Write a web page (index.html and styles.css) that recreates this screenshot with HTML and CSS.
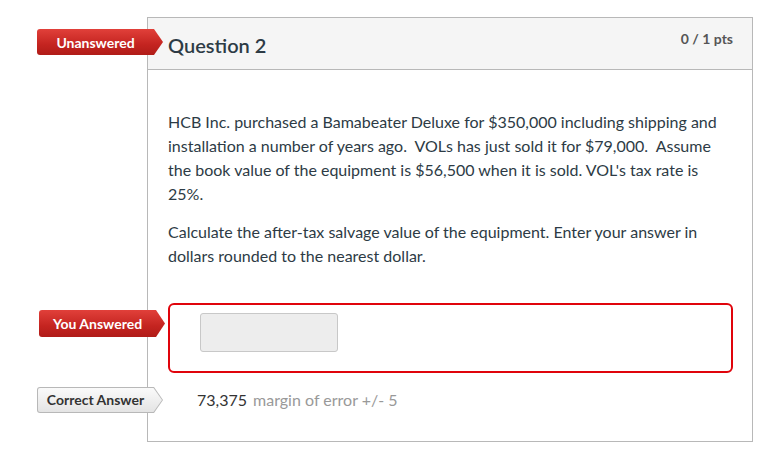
FILE: index.html
```html
<!DOCTYPE html>
<html>
<head>
<meta charset="utf-8">
<link rel="stylesheet" href="styles.css">
</head>
<body>
<div class="card">
  <div class="header">
    <span class="badge badge-red badge-unanswered">Unanswered</span>
    <h2 class="qname">Question 2</h2>
    <div class="pts">0 / 1 pts</div>
  </div>
  <div class="body">
    <p class="para">HCB Inc. purchased a Bamabeater Deluxe for $350,000 including shipping and installation a number of years ago.&nbsp; VOLs has just sold it for $79,000.&nbsp; Assume the book value of the equipment is $56,500 when it is sold. VOL's tax rate is 25%.</p>
    <p class="para">Calculate the after-tax salvage value of the equipment. Enter your answer in dollars rounded to the nearest dollar.</p>
    <div class="answer-box">
      <span class="badge badge-red badge-you">You Answered</span>
      <div class="input"></div>
    </div>
    <div class="correct-row">
      <span class="badge badge-gray badge-correct"><span class="badge-label">Correct Answer</span></span>
      <span class="value">73,375</span>
      <span class="margin">margin of error +/- 5</span>
    </div>
  </div>
</div>
</body>
</html>
```

FILE: styles.css
```css
html, body {
  margin: 0;
  padding: 0;
  background: #ffffff;
}
body {
  font-family: Lato, "Open Sans", "Liberation Sans", sans-serif;
  color: #2d3b45;
}
.card {
  margin: 17px 0 0 147px;
  width: 606px;
  box-sizing: border-box;
  border: 1px solid #b8b8b8;
  padding-bottom: 28px;
}
.header {
  position: relative;
  height: 51px;
  background: #f5f5f5;
  border-bottom: 1px solid #b8b8b8;
  display: flex;
  justify-content: space-between;
  align-items: flex-start;
  padding: 0 19px 0 20px;
}
.qname {
  margin: 15px 0 0;
  font-size: 20px;
  line-height: 24px;
  font-weight: 600;
  color: #2d3b45;
}
.pts {
  margin-top: 11px;
  font-size: 14px;
  line-height: 20px;
  font-weight: 700;
  color: #555;
}
.body {
  padding: 40px 19px 0 20px;
}
.para {
  margin: 0 0 14px;
  font-size: 16px;
  line-height: 24px;
}
.answer-box {
  position: relative;
  margin-top: 35px;
  height: 70px;
  box-sizing: border-box;
  border: 2px solid #e0040c;
  border-radius: 6px;
  padding: 8px 30px;
}
.input {
  width: 138px;
  height: 39px;
  box-sizing: border-box;
  background: #ededed;
  border: 1px solid #c8c8c8;
  border-radius: 3px;
}
.correct-row {
  position: relative;
  margin-top: 14px;
  height: 26px;
  display: flex;
  align-items: center;
  padding-left: 29px;
  font-size: 16px;
  line-height: 24px;
}
.value {
  color: #333;
}
.margin {
  margin-left: 6px;
  color: #999;
  font-size: 16px;
}
.badge {
  position: absolute;
  box-sizing: border-box;
  height: 26px;
  width: 126px;
  padding-right: 9px;
  display: flex;
  align-items: center;
  justify-content: center;
  font-size: 14px;
  font-weight: 700;
  border-radius: 3px 0 0 3px;
  clip-path: polygon(0 0, calc(100% - 9px) 0, 100% 50%, calc(100% - 9px) 100%, 0 100%);
}
.badge-red {
  color: #fff;
  background: linear-gradient(#e1403a, #c42420 60%, #b01c18);
}
.badge-unanswered {
  left: -111px;
  top: 11px;
}
.badge-you {
  left: -131px;
  top: 5px;
  height: 27px;
  width: 126px;
}
.badge-gray {
  color: #333;
  background: #b8b8b8;
  left: -131px;
  top: 0;
}
.badge-gray::before {
  content: "";
  position: absolute;
  inset: 1px;
  border-radius: 2px 0 0 2px;
  background: linear-gradient(#fafafa, #e4e4e4);
  clip-path: polygon(0 0, calc(100% - 8.5px) 0, 100% 50%, calc(100% - 8.5px) 100%, 0 100%);
}
.badge-label {
  position: relative;
}
```
